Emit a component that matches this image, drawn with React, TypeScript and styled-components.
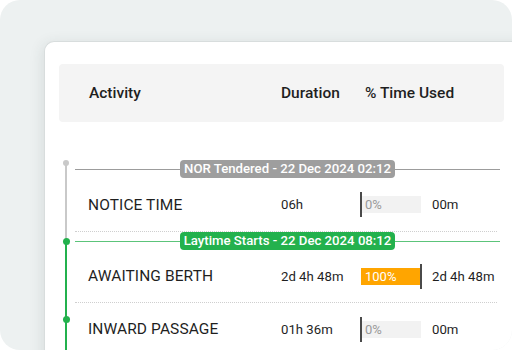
import React from "react";
import styled, { createGlobalStyle } from "styled-components";

const Global = createGlobalStyle`
  html, body { margin: 0; padding: 0; background: #ffffff; }
  body { font-family: Roboto, "Liberation Sans", Arial, sans-serif; }
`;

const Frame = styled.div`
  width: 512px;
  height: 350px;
  border-radius: 20px;
  background: #edf1f1;
  overflow: hidden;
  box-sizing: border-box;
  padding: 41px 0 0 44px;
`;

const Card = styled.div`
  width: 500px;
  height: 340px;
  background: #ffffff;
  border: 1px solid #d8dddd;
  border-right: none;
  border-bottom: none;
  border-radius: 10px 0 0 0;
  box-shadow: -2px 2px 14px rgba(40, 60, 60, 0.1);
  box-sizing: border-box;
  padding: 22px 0 0 14px;
`;

const Header = styled.div`
  width: 445px;
  height: 58px;
  background: #f4f4f4;
  border-radius: 4px;
  display: grid;
  grid-template-columns: 192px 84px 1fr;
  align-items: center;
  padding-left: 30px;
  box-sizing: border-box;
  font-size: 15.5px;
  font-weight: 500;
  color: #1f1f1f;
`;

const Timeline = styled.div`
  margin-top: 38px;
  width: 441px;
  display: flex;
  flex-direction: column;
`;

const Item = styled.div<{ $h: number }>`
  display: grid;
  grid-template-columns: 16px 1fr;
  height: ${(p) => p.$h}px;
`;

const Rail = styled.div<{
  $start: number;
  $split: number;
  $above: string;
  $below: string;
  $dot?: number;
  $dotColor?: string;
  $dotSize?: number;
}>`
  position: relative;
  &::before {
    content: "";
    position: absolute;
    left: 6px;
    width: 2px;
    top: ${(p) => p.$start}px;
    bottom: 0;
    background: linear-gradient(
      to bottom,
      ${(p) => p.$above} 0,
      ${(p) => p.$above} ${(p) => p.$split}px,
      ${(p) => p.$below} ${(p) => p.$split}px,
      ${(p) => p.$below} 100%
    );
  }
  &::after {
    content: "";
    display: ${(p) => (p.$dot === undefined ? "none" : "block")};
    position: absolute;
    left: ${(p) => 7 - (p.$dotSize ?? 7) / 2}px;
    top: ${(p) => (p.$dot ?? 0) - (p.$dotSize ?? 7) / 2}px;
    width: ${(p) => p.$dotSize ?? 7}px;
    height: ${(p) => p.$dotSize ?? 7}px;
    border-radius: 50%;
    background: ${(p) => p.$dotColor};
  }
`;

const Marker = styled.div<{ $line: string }>`
  display: flex;
  align-items: center;
  &::before,
  &::after {
    content: "";
    flex: 1;
    height: 1px;
    background: ${(p) => p.$line};
  }
`;

const Badge = styled.span<{ $bg: string }>`
  background: ${(p) => p.$bg};
  color: #ffffff;
  font-size: 13.2px;
  font-weight: 500;
  line-height: 18px;
  height: 18px;
  padding: 0 4px;
  border-radius: 4px;
  white-space: nowrap;
`;

const Row = styled.div<{ $divider: boolean }>`
  display: grid;
  grid-template-columns: 193px 80px 71px 1fr;
  align-items: center;
  padding-left: 13px;
  margin-right: 3px;
  border-bottom: ${(p) => (p.$divider ? "1px dotted #cfcfcf" : "none")};
  font-size: 13px;
  color: #1f1f1f;
  white-space: nowrap;
`;

const Label = styled.span`
  font-size: 15.5px;
  letter-spacing: 0.1px;
`;

const Figure = styled.span`
  font-size: 13.2px;
`;

const Bar = styled.div<{ $full: boolean }>`
  position: relative;
  width: 60px;
  height: 17px;
  background: ${(p) => (p.$full ? "#ffa500" : "#f2f2f2")};
  color: ${(p) => (p.$full ? "#ffffff" : "#9a9a9a")};
  font-size: 13px;
  line-height: 17px;
  padding-left: 4px;
  box-sizing: border-box;
  &::after {
    content: "";
    position: absolute;
    top: -4px;
    bottom: -4px;
    width: 2px;
    background: #4a4a4a;
    ${(p) => (p.$full ? "right: -1px;" : "left: -1px;")}
  }
`;

const GREY = "#c9c9c9";
const GREEN = "#23b14d";

type Act = { name: string; dur: string; pct: number; used: string };

const ActivityRow = ({ a, divider }: { a: Act; divider: boolean }) => (
  <Row $divider={divider}>
    <Label>{a.name}</Label>
    <Figure>{a.dur}</Figure>
    <Bar $full={a.pct >= 100}>{a.pct}%</Bar>
    <Figure>{a.used}</Figure>
  </Row>
);

export default function App() {
  return (
    <>
      <Global />
      <Frame>
        <Card>
          <Header>
            <span>Activity</span>
            <span>Duration</span>
            <span>% Time Used</span>
          </Header>
          <Timeline>
            <Item $h={18}>
              <Rail $start={3} $split={0} $above={GREY} $below={GREY} $dot={3} $dotColor="#c9c9c9" $dotSize={6} />
              <Marker $line="#9c9c9c">
                <Badge $bg="#9e9e9e">NOR Tendered - 22 Dec 2024 02:12</Badge>
              </Marker>
            </Item>
            <Item $h={54}>
              <Rail $start={0} $split={0} $above={GREY} $below={GREY} />
              <ActivityRow a={{ name: "NOTICE TIME", dur: "06h", pct: 0, used: "00m" }} divider />
            </Item>
            <Item $h={18}>
              <Rail $start={0} $split={9} $above={GREY} $below={GREEN} $dot={9} $dotColor={GREEN} />
              <Marker $line="#5cc47a">
                <Badge $bg={GREEN}>Laytime Starts - 22 Dec 2024 08:12</Badge>
              </Marker>
            </Item>
            <Item $h={53}>
              <Rail $start={0} $split={0} $above={GREEN} $below={GREEN} />
              <ActivityRow a={{ name: "AWAITING BERTH", dur: "2d 4h 48m", pct: 100, used: "2d 4h 48m" }} divider />
            </Item>
            <Item $h={52}>
              <Rail $start={0} $split={0} $above={GREEN} $below={GREEN} $dot={16} $dotColor={GREEN} />
              <ActivityRow a={{ name: "INWARD PASSAGE", dur: "01h 36m", pct: 0, used: "00m" }} divider={false} />
            </Item>
          </Timeline>
        </Card>
      </Frame>
    </>
  );
}
